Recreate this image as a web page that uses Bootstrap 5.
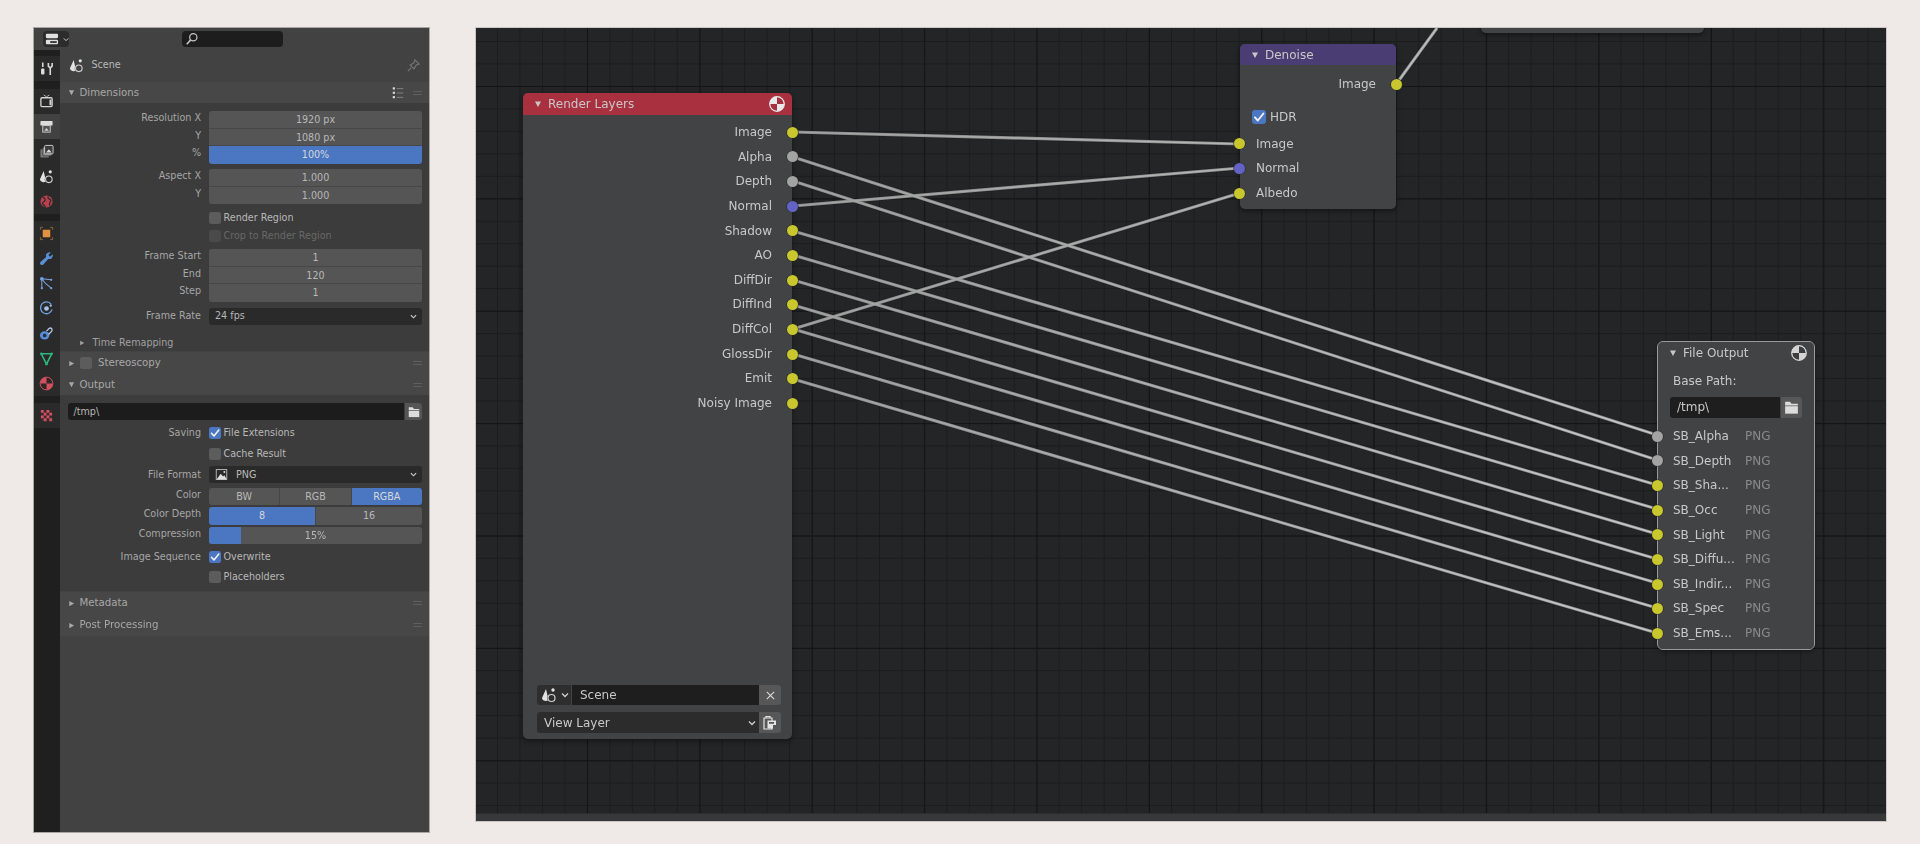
<!DOCTYPE html>
<html lang="en">
<head>
    <meta charset="UTF-8">
    <title>Blender compositor</title>
    <link href="https://cdn.jsdelivr.net/npm/bootstrap@5.3.2/dist/css/bootstrap.min.css" rel="stylesheet">
    <script src="https://cdn.jsdelivr.net/npm/bootstrap@5.3.2/dist/js/bootstrap.bundle.min.js"></script>
    <style>
        html, body { height: 844px; overflow: hidden; }
        body { background: #efe9e8; font-family: "DejaVu Sans", sans-serif; color: #b8b8b8; }
        .page-wrap { padding: 28px 34px 12px; gap: 47px; height: 844px; }

        /* properties editor */
        .props { width: 395px; height: 804px; background: #424242; outline: 1px solid #a9a7a6; font-size: 9.6px; filter: blur(.7px); flex: none; }
        .props-top { height: 22px; padding-left: 9px; }
        .type-btn { width: 26px; height: 16px; background: #2c2c2c; border-radius: 4px; padding-left: 2px; }
        .search-box { width: 101px; height: 16px; background: #1d1d1d; border-radius: 4px; margin-left: 113px; padding-left: 3px; }
        .tabs { width: 25.5px; background: #1f1f1f; padding-top: 5.5px; flex: none; }
        .tab-item { height: 25px; background: #2a2a2a; }
        .tab-item.active { background: #424242; }
        .tab-item.gap8 { margin-top: 8px; }
        .tab-item.gap7 { margin-top: 7px; }
        .crumb { height: 30px; margin-bottom: 2px; padding: 0 8px 0 9px; }
        .sec-head { height: 21px; background: #474747; padding: 0 7px; color: #a8a8a8; font-size: 10.2px; }
        .sec-head .tri { width: 9px; }
        .head-stereo { height: 22px; margin-top: 1px; }
        .head-closed { height: 22px; }
        .head-after { margin-top: 1px; }
        .sec-body { background: #3c3c3c; }
        .sec-dim { padding: 8px 7px 0 0; height: 248px; }
        .sec-out { padding: 8px 7px 6px 8px; height: 196px; }
        .grip { width: 9px; height: 4px; border-top: 1px solid #5e5e5e; border-bottom: 1px solid #5e5e5e; }
        .prop-row { min-height: 17.5px; }
        .prop-label { width: 141.5px; text-align: right; margin-right: 8px; color: #a6a6a6; flex: none; }
        .prop-label.output-label { width: 133.5px; }
        .prop-val { flex: 1; height: 17.5px; }
        .fld { background: #555; text-align: center; line-height: 17.5px; height: 17.5px; color: #b8b8b8; }
        .fld-blue { background: #4a76c2; color: #d8d8d8; }
        .rd-top { border-radius: 3px 3px 0 0; border-bottom: 1px solid #474747; }
        .rd-mid { border-bottom: 1px solid #474747; }
        .rd-bot { border-radius: 0 0 3px 3px; }
        .rd-all { border-radius: 3px; }
        .seg-left { border-radius: 3px 0 0 3px; border-right: 1px solid #474747; }
        .seg-mid { border-right: 1px solid #474747; }
        .seg-right { border-radius: 0 3px 3px 0; }
        .fld-menu { background: #2a2a2a; color: #b8b8b8; border-radius: 3px; padding: 0 5px 0 6px; height: 17px; }
        .fld-path { background: #1c1c1c; border-radius: 3px 0 0 3px; height: 17px; line-height: 17px; padding-left: 6px; flex: 1; }
        .fld-folder { background: #555; width: 17px; height: 17px; border-radius: 0 3px 3px 0; margin-left: 1px; }
        .chk { width: 12px; height: 12px; background: #5c5c5c; border-radius: 2.5px; margin-right: 2.5px; flex: none; }
        .chk-on { background: #4a76c2; }
        .chk-off { opacity: .45; }
        .txt-dim { color: #686868; }
        .sp2 { margin-top: 2px; } .sp3 { margin-top: 3px; } .sp4 { margin-top: 4px; }
        .sp5 { margin-top: 5px; } .sp5h { margin-top: 5.5px; } .sp6 { margin-top: 6px; } .sp9 { margin-top: 9px; }
        .tall-row { height: 18px; }
        .indent-row { padding-left: 19px; color: #a0a0a0; height: 18px; }
        .seg-cell { flex: 1; }
        .meter { position: relative; }
        .meter-fill { position: absolute; left: 0; top: 0; bottom: 0; background: #4a76c2; border-radius: 3px 0 0 3px; }
        .meter-text { position: relative; }

        /* node editor canvas */
        .canvas { width: 1410px; height: 793px; position: relative; overflow: hidden; flex: none; outline: 1px solid #c9c6c5; filter: blur(.6px);
            background-color: #242526;
            background-image:
                linear-gradient(#131415 1px, transparent 1px),
                linear-gradient(90deg, #131415 1px, transparent 1px),
                linear-gradient(#1b1c1d 1px, transparent 1px),
                linear-gradient(90deg, #1b1c1d 1px, transparent 1px);
            background-size: 112.4px 112.4px, 112.4px 112.4px, 22.48px 22.48px, 22.48px 22.48px;
            background-position: 0 58px, 111px 0, 0 13px, 21px 0;
        }
        .status-strip { position: absolute; left: 0; right: 0; bottom: 0; height: 8px; background: #36383a; border-top: 1px solid #2b2c2d; }
        .wires { position: absolute; left: 0; top: 0; }
        .bnode { position: absolute; background: #424344; border-radius: 5px; box-shadow: 0 2px 5px rgba(0,0,0,.45); font-size: 12px; color: #c8c8c8; }
        .bnode-head { height: 22px; border-radius: 5px 5px 0 0; padding: 0 7px 0 10px; }
        .head-red { background: #a9303f; }
        .head-purple { background: #4a3d74; height: 21px; }
        .head-plain { background: transparent; }
        .head-tri { width: 10px; margin-right: 5px; }
        .node-render { left: 47px; top: 65px; width: 269px; height: 646px; }
        .node-denoise { left: 764px; top: 16px; width: 156px; height: 165px; }
        .node-file { left: 1182px; top: 314px; width: 156px; height: 307px; outline: 1px solid #9a9a9a; }
        .node-clip { left: 1005px; top: -10px; width: 223px; height: 15px; }
        .sock-row { height: 24.65px; line-height: 24.65px; position: relative; }
        .sock-out { text-align: right; padding-right: 20px; }
        .sock-in { padding-left: 16px; }
        .dot { position: absolute; width: 11px; height: 11px; border-radius: 50%; top: 50%; margin-top: -5.5px; background: #c8c72d; box-shadow: 0 0 0 .6px #2a2a2a; }
        .dot-gray { background: #a3a3a3; }
        .dot-blue { background: #6363c7; }
        .dot-r { right: -6px; }
        .dot-l { left: -6px; }
        .rows-render { padding-top: 5px; }
        .rows-denoise-out { padding-top: 7px; }
        .denoise-hdr { height: 24px; padding-left: 12px; margin-top: 8px; }
        .chk-lg { width: 14px; height: 14px; background: #4a76c2; border-radius: 3px; margin-right: 4px; }
        .rows-denoise-in { margin-top: 3px; }
        .node-foot { padding: 0 11px 6px 14px; margin-top: auto; }
        .foot-scene { height: 20px; }
        .foot-ico { width: 34px; background: #2e2e2e; border-radius: 3px 0 0 3px; margin-right: 1px; padding-left: 4px; }
        .foot-inp { flex: 1; background: #1e1e1f; padding-left: 8px; line-height: 20px; }
        .foot-x { width: 22px; background: #575757; border-radius: 0 3px 3px 0; }
        .foot-layer { height: 21px; margin-top: 7px; }
        .foot-menu { flex: 1; background: #2c2c2d; border-radius: 3px 0 0 3px; padding: 0 3px 0 7px; }
        .foot-icon2 { width: 22px; background: #575757; border-radius: 0 3px 3px 0; }
        .base-label { padding-left: 15px; height: 22px; margin-top: 6px; line-height: 22px; }
        .base-path { margin: 5px 12px 0 12px; height: 21px; }
        .base-inp { flex: 1; background: #1e1e1f; border-radius: 3px 0 0 3px; padding-left: 7px; line-height: 21px; }
        .base-btn { width: 21px; background: #575757; border-radius: 0 3px 3px 0; margin-left: 1px; }
        .rows-file { margin-top: 6px; }
        .out-name { width: 87px; padding-left: 15px; white-space: nowrap; flex: none; }
        .out-fmt { color: #8a8a8a; }
    </style>
</head>
<body>
    <!-- icon set -->
    <svg width="0" height="0" class="position-absolute">
        <symbol id="i-type" viewBox="0 0 16 16"><rect x="1" y="2" width="14" height="5" rx="1.2" fill="#e0e0e0"/><rect x="1" y="9" width="14" height="5" rx="1.2" fill="#e0e0e0"/><rect x="6" y="10.5" width="7.5" height="2" fill="#2c2c2c"/></symbol>
        <symbol id="i-search" viewBox="0 0 16 16"><circle cx="9.5" cy="6" r="4.2" fill="none" stroke="#c4c4c4" stroke-width="1.4"/><path d="M6.5 9 2 14" stroke="#c4c4c4" stroke-width="1.8"/></symbol>
        <symbol id="i-scene" viewBox="0 0 16 16"><path d="M5 2 1 11c0 2 2 3 4 3 .8 0 1.5-.2 2-.5-1-1-1.2-3-.4-4.300L5 2z" fill="#e2e2e2"/><circle cx="12" cy="3" r="1.700" fill="#e2e2e2"/><circle cx="10.500" cy="11" r="3.500" fill="none" stroke="#d0d0d0" stroke-width="1.200"/></symbol>
        <symbol id="i-pin" viewBox="0 0 16 16"><path d="M9.500 2 14 6.500l-3 1-2.500 4L4.500 7.500l4-2.500zM5.500 10.500 2 14" fill="none" stroke="#777" stroke-width="1.200"/></symbol>
        <symbol id="i-list" viewBox="0 0 16 16"><rect x="2" y="1.500" width="2.500" height="2.500" fill="#d8d8d8"/><rect x="2" y="6.500" width="2.500" height="2.500" fill="#d8d8d8"/><rect x="2" y="11.500" width="2.500" height="2.500" fill="#d8d8d8"/><path d="M6.500 3h7.500M6.500 8h7.500M6.500 13h7.500" stroke="#8a8a8a" stroke-width="1"/></symbol>
        <symbol id="i-tool" viewBox="0 0 16 16"><path d="M4 1.500v5M10 2v3.500l2 2 2-2V2M12 7.500V15" stroke="#d8d8d8" stroke-width="1.700" fill="none"/><rect x="2.200" y="8" width="3.600" height="6.500" rx="1.200" fill="#e0e0e0"/></symbol>
        <symbol id="i-render" viewBox="0 0 16 16"><path d="M8 3 5 1M8 3l3-2" stroke="#bbb" stroke-width="1"/><rect x="2" y="4" width="12" height="9.500" rx="1.200" fill="none" stroke="#d4d4d4" stroke-width="1.400"/><rect x="11.200" y="6" width="2" height="6" fill="#d4d4d4"/></symbol>
        <symbol id="i-output" viewBox="0 0 16 16"><rect x="1.500" y="2" width="13" height="5" rx="1" fill="#dcdcdc"/><rect x="4" y="7" width="8" height="7" fill="#555" stroke="#ccc" stroke-width="1"/><path d="M5.500 12.500 8 9.500l2.500 3z" fill="#ccc"/></symbol>
        <symbol id="i-layers" viewBox="0 0 16 16"><rect x="1.500" y="5.500" width="9" height="9" rx="1" fill="#777"/><rect x="4" y="3.500" width="9.500" height="9" rx="1" fill="#8c8c8c" stroke="#333" stroke-width=".6"/><rect x="6" y="1.500" width="9" height="9" rx="1" fill="#3b3b3b" stroke="#d0d0d0" stroke-width="1"/><path d="M7.500 9 10.500 5.500 13.500 9z" fill="#dcdcdc"/></symbol>
        <symbol id="i-world" viewBox="0 0 16 16"><circle cx="8" cy="8" r="6.500" fill="#b8414f"/><path d="M4 3.500c2 .5 3 2 2.500 3.500S3.500 8 3.800 10s2.500 2 3 4M10 2.500c-1 1.500 0 2.500 1.500 3s1.500 2 .5 3-1 2.500-.5 4" fill="none" stroke="#2a2a2a" stroke-width="1.300"/></symbol>
        <symbol id="i-object" viewBox="0 0 16 16"><rect x="4" y="4" width="8" height="8" fill="#e1913f"/><path d="M1.500 4V1.500H4M12 1.500h2.500V4M14.500 12v2.500H12M4 14.500H1.500V12" fill="none" stroke="#9a6a38" stroke-width="1"/></symbol>
        <symbol id="i-wrench" viewBox="0 0 16 16"><path d="M14.500 3.500 11.800 6 10 4.200 12.500 1.500C10.500 1 8 2 7.500 4.300c-.2.800 0 1.500.2 2.200L1.800 11.500c-1 1-.8 2.200 0 2.900s1.900.8 2.800-.1l5.200-5.800c.7.200 1.500.2 2.300 0 2.300-.6 3-3 2.400-5z" fill="#5a8fd8"/></symbol>
        <symbol id="i-particles" viewBox="0 0 16 16"><path d="M3 3 13 4M3 3l4 5 6 5M3 3v10" fill="none" stroke="#7aa0d8" stroke-width="1.100"/><circle cx="3" cy="3" r="2" fill="#6ea0e0"/><circle cx="13" cy="4" r="1.200" fill="#6ea0e0"/><circle cx="3" cy="13" r="1.200" fill="#6ea0e0"/><circle cx="13" cy="13" r="1.200" fill="#6ea0e0"/></symbol>
        <symbol id="i-physics" viewBox="0 0 16 16"><path d="M13 3.500A6.300 6.300 0 1 0 14 9" fill="none" stroke="#6ea0e0" stroke-width="1.400"/><circle cx="8" cy="8" r="2.500" fill="#a8c4ec"/><circle cx="12.500" cy="5" r="1.200" fill="#a8c4ec"/></symbol>
        <symbol id="i-constraint" viewBox="0 0 16 16"><ellipse cx="6" cy="10" rx="5" ry="4.500" fill="#5a8fd8"/><circle cx="6" cy="10" r="2" fill="#24323f"/><path d="M8 5.500 11 2.500c1.200-.8 2.500 0 2.800 1s.2 2-1 3L10 9" fill="none" stroke="#b0c8ea" stroke-width="1.400"/></symbol>
        <symbol id="i-data" viewBox="0 0 16 16"><path d="M2.500 3h11L8 14z" fill="none" stroke="#2eb87c" stroke-width="1.700" stroke-linejoin="round"/><circle cx="2.500" cy="3" r="1.300" fill="#2eb87c"/><circle cx="13.500" cy="3" r="1.300" fill="#2eb87c"/><circle cx="8" cy="14" r="1.300" fill="#2eb87c"/></symbol>
        <symbol id="i-material" viewBox="0 0 16 16"><circle cx="8" cy="8" r="6.800" fill="#d2505f"/><path d="M8 1.200A6.800 6.800 0 0 1 14.800 8H8zM8 8v6.800A6.800 6.800 0 0 1 1.200 8z" fill="#2e2627"/><circle cx="8" cy="8" r="6.800" fill="none" stroke="#d2505f" stroke-width="1"/></symbol>
        <symbol id="i-texture" viewBox="0 0 16 16"><rect x="2" y="2" width="12" height="12" fill="#3a2a2c"/><path d="M2 2h3v3H2zM8 2h3v3H8zM5 5h3v3H5zM11 5h3v3h-3zM2 8h3v3H2zM8 8h3v3H8zM5 11h3v3H5zM11 11h3v3h-3z" fill="#d2505f"/></symbol>
        <symbol id="i-folder" viewBox="0 0 16 16"><path d="M2 2.500h4.500L8 4.500h6V6H2z" fill="#dcdcdc"/><rect x="2" y="6.800" width="12" height="7" fill="#dcdcdc"/></symbol>
        <symbol id="i-image" viewBox="0 0 16 16"><rect x="1.500" y="2" width="13" height="12" fill="none" stroke="#d0d0d0" stroke-width="1"/><path d="M2 14 7 7l3 3.500L11.500 9l3 5z" fill="#e0e0e0"/><circle cx="11.500" cy="5" r="1.200" fill="#e0e0e0"/></symbol>
        <symbol id="i-check" viewBox="0 0 12 12"><path d="M2.500 6.300 5 9l4.800-6" fill="none" stroke="#f2f2f2" stroke-width="1.600" stroke-linecap="round" stroke-linejoin="round"/></symbol>
        <symbol id="i-ball" viewBox="0 0 16 16"><circle cx="8" cy="8" r="7.300" fill="#e8e8e8"/><path d="M8 1a7 7 0 0 1 7 7H8zM8 8v7a7 7 0 0 1-7-7z" fill="#a9303f"/><circle cx="8" cy="8" r="7.300" fill="none" stroke="#e8e8e8" stroke-width="1.200"/></symbol>
        <symbol id="i-ball2" viewBox="0 0 16 16"><circle cx="8" cy="8" r="7.300" fill="#d4d4d4"/><path d="M8 1a7 7 0 0 1 7 7H8zM8 8v7a7 7 0 0 1-7-7z" fill="#3e3e3e"/><circle cx="8" cy="8" r="7.300" fill="none" stroke="#d4d4d4" stroke-width="1.200"/></symbol>
        <symbol id="i-x" viewBox="0 0 12 12"><path d="M2 2l8 8M10 2l-8 8" stroke="#dcdcdc" stroke-width="1.200"/></symbol>
        <symbol id="i-copy" viewBox="0 0 16 16"><path d="M2 3h8v11H2zM4 3V1.500h4V3" fill="none" stroke="#e4e4e4" stroke-width="1.200"/><path d="M5.500 5.500H14V10H11v3.500H5.500z" fill="#e4e4e4"/><rect x="7" y="7" width="5" height="1.800" fill="#575757"/></symbol>
        <symbol id="i-chev" viewBox="0 0 8 8"><path d="M1 2.500 4 5.500l3-3" fill="none" stroke="#cfcfcf" stroke-width="1.300"/></symbol>
        <symbol id="i-down" viewBox="0 0 8 8"><path d="M1 1.500h6L4 7z" fill="currentColor"/></symbol>
        <symbol id="i-right" viewBox="0 0 8 8"><path d="M1.500 1v6L7 4z" fill="currentColor"/></symbol>
    </svg>

    <div class="page-wrap d-flex align-items-start">
        <!-- properties panel -->
        <div class="props d-flex flex-column">
            <div class="props-top d-flex align-items-center">
                <div class="type-btn d-flex align-items-center">
                    <svg width="16" height="16"><use href="#i-type"/></svg><svg width="7" height="7" class="ms-1"><use href="#i-chev"/></svg>
                </div>
                <div class="search-box d-flex align-items-center"><svg width="14" height="14"><use href="#i-search"/></svg></div>
            </div>
            <div class="d-flex flex-grow-1">
                <div class="tabs d-flex flex-column">
                    <div class="tab-item d-flex align-items-center justify-content-center"><svg width="15" height="15"><use href="#i-tool"/></svg></div>
                    <div class="tab-item gap8 d-flex align-items-center justify-content-center"><svg width="15" height="15"><use href="#i-render"/></svg></div>
                    <div class="tab-item active d-flex align-items-center justify-content-center"><svg width="15" height="15"><use href="#i-output"/></svg></div>
                    <div class="tab-item d-flex align-items-center justify-content-center"><svg width="15" height="15"><use href="#i-layers"/></svg></div>
                    <div class="tab-item d-flex align-items-center justify-content-center"><svg width="15" height="15"><use href="#i-scene"/></svg></div>
                    <div class="tab-item d-flex align-items-center justify-content-center"><svg width="15" height="15"><use href="#i-world"/></svg></div>
                    <div class="tab-item gap7 d-flex align-items-center justify-content-center"><svg width="15" height="15"><use href="#i-object"/></svg></div>
                    <div class="tab-item d-flex align-items-center justify-content-center"><svg width="15" height="15"><use href="#i-wrench"/></svg></div>
                    <div class="tab-item d-flex align-items-center justify-content-center"><svg width="15" height="15"><use href="#i-particles"/></svg></div>
                    <div class="tab-item d-flex align-items-center justify-content-center"><svg width="15" height="15"><use href="#i-physics"/></svg></div>
                    <div class="tab-item d-flex align-items-center justify-content-center"><svg width="15" height="15"><use href="#i-constraint"/></svg></div>
                    <div class="tab-item d-flex align-items-center justify-content-center"><svg width="15" height="15"><use href="#i-data"/></svg></div>
                    <div class="tab-item d-flex align-items-center justify-content-center"><svg width="15" height="15"><use href="#i-material"/></svg></div>
                    <div class="tab-item gap7 d-flex align-items-center justify-content-center"><svg width="15" height="15"><use href="#i-texture"/></svg></div>
                </div>
                <div class="flex-grow-1 d-flex flex-column">
                    <div class="crumb d-flex align-items-center justify-content-between">
                        <div class="d-flex align-items-center gap-2"><svg width="15" height="15"><use href="#i-scene"/></svg><span>Scene</span></div>
                        <svg width="15" height="15"><use href="#i-pin"/></svg>
                    </div>

                    <div class="sec-head d-flex align-items-center">
                        <svg class="tri me-1" width="7" height="7"><use href="#i-down"/></svg><span class="flex-grow-1">Dimensions</span>
                        <svg class="me-2" width="14" height="14"><use href="#i-list"/></svg><span class="grip"></span>
                    </div>
                    <div class="sec-body sec-dim">
                        <div class="prop-row d-flex"><div class="prop-label">Resolution X</div><div class="prop-val fld rd-top">1920 px</div></div>
                        <div class="prop-row d-flex"><div class="prop-label">Y</div><div class="prop-val fld rd-mid">1080 px</div></div>
                        <div class="prop-row d-flex"><div class="prop-label">%</div><div class="prop-val fld fld-blue rd-bot">100%</div></div>
                        <div class="prop-row d-flex sp5h"><div class="prop-label">Aspect X</div><div class="prop-val fld rd-top">1.000</div></div>
                        <div class="prop-row d-flex"><div class="prop-label">Y</div><div class="prop-val fld rd-bot">1.000</div></div>
                        <div class="tall-row d-flex align-items-center sp5"><div class="prop-label"></div><span class="chk"></span><span>Render Region</span></div>
                        <div class="tall-row d-flex align-items-center"><div class="prop-label"></div><span class="chk chk-off"></span><span class="txt-dim">Crop to Render Region</span></div>
                        <div class="prop-row d-flex sp4"><div class="prop-label">Frame Start</div><div class="prop-val fld rd-top">1</div></div>
                        <div class="prop-row d-flex"><div class="prop-label">End</div><div class="prop-val fld rd-mid">120</div></div>
                        <div class="prop-row d-flex"><div class="prop-label">Step</div><div class="prop-val fld rd-bot">1</div></div>
                        <div class="prop-row d-flex align-items-center sp6"><div class="prop-label">Frame Rate</div><div class="fld-menu flex-grow-1 d-flex align-items-center justify-content-between"><span>24 fps</span><svg width="7" height="7"><use href="#i-chev"/></svg></div></div>
                        <div class="indent-row d-flex align-items-center sp9"><svg class="me-2" width="6" height="6"><use href="#i-right"/></svg><span>Time Remapping</span></div>
                    </div>

                    <div class="sec-head head-stereo d-flex align-items-center">
                        <svg class="tri me-1" width="7" height="7"><use href="#i-right"/></svg><span class="chk"></span><span class="flex-grow-1 ms-1">Stereoscopy</span><span class="grip"></span>
                    </div>
                    <div class="sec-head d-flex align-items-center">
                        <svg class="tri me-1" width="7" height="7"><use href="#i-down"/></svg><span class="flex-grow-1">Output</span><span class="grip"></span>
                    </div>
                    <div class="sec-body sec-out">
                        <div class="d-flex"><div class="fld-path">/tmp\</div><div class="fld-folder d-flex align-items-center justify-content-center"><svg width="14" height="14"><use href="#i-folder"/></svg></div></div>
                        <div class="tall-row d-flex align-items-center sp4"><div class="prop-label output-label">Saving</div><span class="chk chk-on"><svg class="d-block" width="12" height="12"><use href="#i-check"/></svg></span><span>File Extensions</span></div>
                        <div class="tall-row d-flex align-items-center sp3"><div class="prop-label output-label"></div><span class="chk"></span><span>Cache Result</span></div>
                        <div class="prop-row d-flex align-items-center sp3"><div class="prop-label output-label">File Format</div><div class="fld-menu flex-grow-1 d-flex align-items-center justify-content-between"><span class="d-flex align-items-center gap-2"><svg width="13" height="13"><use href="#i-image"/></svg>PNG</span><svg width="7" height="7"><use href="#i-chev"/></svg></div></div>
                        <div class="prop-row d-flex sp4"><div class="prop-label output-label">Color</div><div class="prop-val d-flex"><div class="fld seg-cell seg-left">BW</div><div class="fld seg-cell seg-mid">RGB</div><div class="fld fld-blue seg-cell seg-right">RGBA</div></div></div>
                        <div class="prop-row d-flex sp2"><div class="prop-label output-label">Color Depth</div><div class="prop-val d-flex"><div class="fld fld-blue seg-cell seg-left">8</div><div class="fld seg-cell seg-right">16</div></div></div>
                        <div class="prop-row d-flex sp2"><div class="prop-label output-label">Compression</div><div class="prop-val fld rd-all meter"><div class="meter-fill" style="width: 15%"></div><span class="meter-text">15%</span></div></div>
                        <div class="tall-row d-flex align-items-center sp4"><div class="prop-label output-label">Image Sequence</div><span class="chk chk-on"><svg class="d-block" width="12" height="12"><use href="#i-check"/></svg></span><span>Overwrite</span></div>
                        <div class="tall-row d-flex align-items-center sp2"><div class="prop-label output-label"></div><span class="chk"></span><span>Placeholders</span></div>
                    </div>

                    <div class="sec-head head-closed head-after d-flex align-items-center">
                        <svg class="tri me-1" width="7" height="7"><use href="#i-right"/></svg><span class="flex-grow-1">Metadata</span><span class="grip"></span>
                    </div>
                    <div class="sec-head head-closed d-flex align-items-center">
                        <svg class="tri me-1" width="7" height="7"><use href="#i-right"/></svg><span class="flex-grow-1">Post Processing</span><span class="grip"></span>
                    </div>
                </div>
            </div>
        </div>

        <!-- node editor -->
        <div class="canvas">
            <svg class="wires" width="1410" height="793">
                <defs>
                    <linearGradient id="wire-grad" gradientUnits="userSpaceOnUse" x1="317" y1="0" x2="1181" y2="0">
                        <stop offset="0" stop-color="#a0a0a0"/>
                        <stop offset="1" stop-color="#c8c8c8"/>
                    </linearGradient>
                    <g id="wire-set">
                        <line x1="317" y1="104" x2="764" y2="116"/>
                        <line x1="317" y1="178" x2="764" y2="140"/>
                        <line x1="317" y1="301" x2="764" y2="165"/>
                        <line x1="921" y1="55" x2="961" y2="0"/>
                        <line x1="317" y1="129" x2="1181" y2="407"/>
                        <line x1="317" y1="153" x2="1181" y2="432"/>
                        <line x1="317" y1="203" x2="1181" y2="457"/>
                        <line x1="317" y1="227" x2="1181" y2="481"/>
                        <line x1="317" y1="252" x2="1181" y2="506"/>
                        <line x1="317" y1="277" x2="1181" y2="531"/>
                        <line x1="317" y1="301" x2="1181" y2="555"/>
                        <line x1="317" y1="326" x2="1181" y2="580"/>
                        <line x1="317" y1="351" x2="1181" y2="605"/>
                    </g>
                </defs>
                <use href="#wire-set" stroke="#191a1b" stroke-opacity=".45" stroke-width="4.6"/>
                <use href="#wire-set" stroke="#8a8a8a" stroke-width="3.2"/>
                <use href="#wire-set" stroke="url(#wire-grad)" stroke-width="1.7"/>
            </svg>

            <div class="bnode node-clip"></div>

            <div class="bnode node-render d-flex flex-column">
                <div class="bnode-head head-red d-flex align-items-center">
                    <svg class="head-tri" width="8" height="8"><use href="#i-down"/></svg><span class="flex-grow-1">Render Layers</span>
                    <svg width="16" height="16"><use href="#i-ball"/></svg>
                </div>
                <div class="rows-render">
                    <div class="sock-row sock-out">Image<span class="dot dot-r"></span></div>
                    <div class="sock-row sock-out">Alpha<span class="dot dot-r dot-gray"></span></div>
                    <div class="sock-row sock-out">Depth<span class="dot dot-r dot-gray"></span></div>
                    <div class="sock-row sock-out">Normal<span class="dot dot-r dot-blue"></span></div>
                    <div class="sock-row sock-out">Shadow<span class="dot dot-r"></span></div>
                    <div class="sock-row sock-out">AO<span class="dot dot-r"></span></div>
                    <div class="sock-row sock-out">DiffDir<span class="dot dot-r"></span></div>
                    <div class="sock-row sock-out">DiffInd<span class="dot dot-r"></span></div>
                    <div class="sock-row sock-out">DiffCol<span class="dot dot-r"></span></div>
                    <div class="sock-row sock-out">GlossDir<span class="dot dot-r"></span></div>
                    <div class="sock-row sock-out">Emit<span class="dot dot-r"></span></div>
                    <div class="sock-row sock-out">Noisy Image<span class="dot dot-r"></span></div>
                </div>
                <div class="node-foot">
                    <div class="foot-scene d-flex align-items-stretch">
                        <div class="foot-ico d-flex align-items-center gap-1"><svg width="16" height="16"><use href="#i-scene"/></svg><svg width="8" height="8"><use href="#i-chev"/></svg></div>
                        <div class="foot-inp">Scene</div>
                        <div class="foot-x d-flex align-items-center justify-content-center"><svg width="11" height="11"><use href="#i-x"/></svg></div>
                    </div>
                    <div class="foot-layer d-flex align-items-stretch">
                        <div class="foot-menu d-flex align-items-center justify-content-between"><span>View Layer</span><svg width="8" height="8"><use href="#i-chev"/></svg></div>
                        <div class="foot-icon2 d-flex align-items-center justify-content-center"><svg width="16" height="16"><use href="#i-copy"/></svg></div>
                    </div>
                </div>
            </div>

            <div class="bnode node-denoise">
                <div class="bnode-head head-purple d-flex align-items-center">
                    <svg class="head-tri" width="8" height="8"><use href="#i-down"/></svg><span>Denoise</span>
                </div>
                <div class="rows-denoise-out">
                    <div class="sock-row sock-out">Image<span class="dot dot-r"></span></div>
                </div>
                <div class="denoise-hdr d-flex align-items-center">
                    <span class="chk-lg"><svg class="d-block" width="14" height="14" viewBox="0 0 12 12"><use href="#i-check"/></svg></span><span>HDR</span>
                </div>
                <div class="rows-denoise-in">
                    <div class="sock-row sock-in">Image<span class="dot dot-l"></span></div>
                    <div class="sock-row sock-in">Normal<span class="dot dot-l dot-blue"></span></div>
                    <div class="sock-row sock-in">Albedo<span class="dot dot-l"></span></div>
                </div>
            </div>

            <div class="bnode node-file">
                <div class="bnode-head head-plain d-flex align-items-center">
                    <svg class="head-tri" width="8" height="8"><use href="#i-down"/></svg><span class="flex-grow-1">File Output</span>
                    <svg width="16" height="16"><use href="#i-ball2"/></svg>
                </div>
                <div class="base-label">Base Path:</div>
                <div class="base-path d-flex align-items-stretch">
                    <div class="base-inp">/tmp\</div>
                    <div class="base-btn d-flex align-items-center justify-content-center"><svg width="17" height="17"><use href="#i-folder"/></svg></div>
                </div>
                <div class="rows-file">
                    <div class="sock-row d-flex"><span class="out-name">SB_Alpha</span><span class="out-fmt">PNG</span><span class="dot dot-l dot-gray"></span></div>
                    <div class="sock-row d-flex"><span class="out-name">SB_Depth</span><span class="out-fmt">PNG</span><span class="dot dot-l dot-gray"></span></div>
                    <div class="sock-row d-flex"><span class="out-name">SB_Sha...</span><span class="out-fmt">PNG</span><span class="dot dot-l"></span></div>
                    <div class="sock-row d-flex"><span class="out-name">SB_Occ</span><span class="out-fmt">PNG</span><span class="dot dot-l"></span></div>
                    <div class="sock-row d-flex"><span class="out-name">SB_Light</span><span class="out-fmt">PNG</span><span class="dot dot-l"></span></div>
                    <div class="sock-row d-flex"><span class="out-name">SB_Diffu...</span><span class="out-fmt">PNG</span><span class="dot dot-l"></span></div>
                    <div class="sock-row d-flex"><span class="out-name">SB_Indir...</span><span class="out-fmt">PNG</span><span class="dot dot-l"></span></div>
                    <div class="sock-row d-flex"><span class="out-name">SB_Spec</span><span class="out-fmt">PNG</span><span class="dot dot-l"></span></div>
                    <div class="sock-row d-flex"><span class="out-name">SB_Ems...</span><span class="out-fmt">PNG</span><span class="dot dot-l"></span></div>
                </div>
            </div>

            <div class="status-strip"></div>
        </div>
    </div>
</body>
</html>
